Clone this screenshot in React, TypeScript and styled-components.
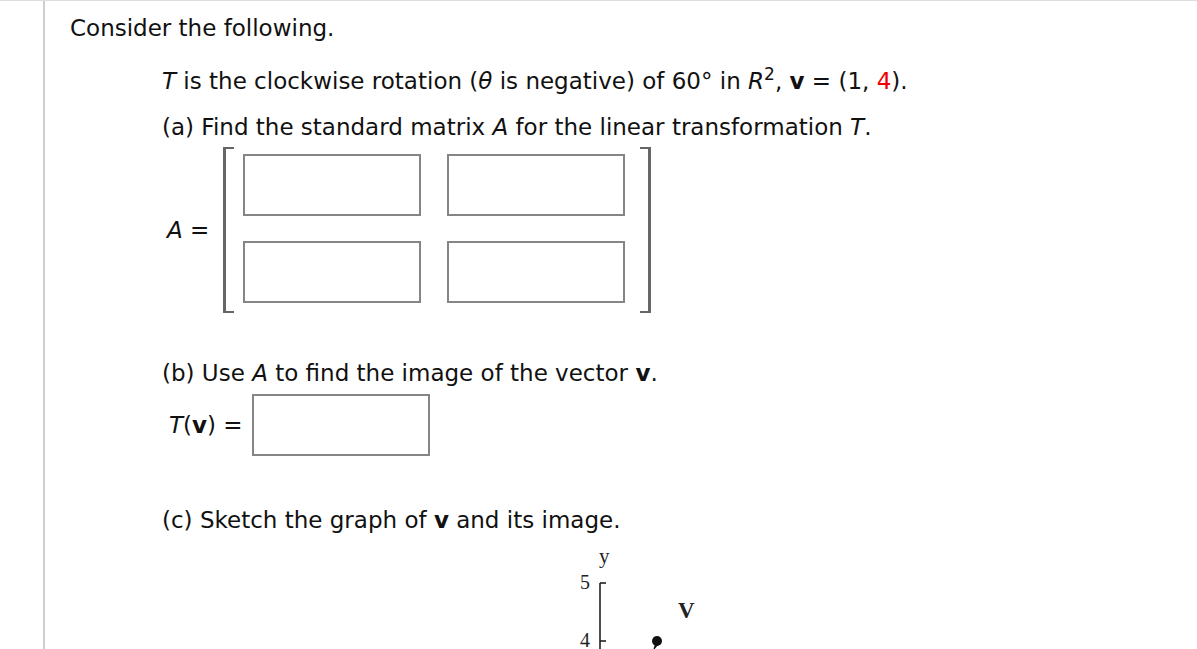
import React from "react";
import styled, { createGlobalStyle } from "styled-components";

const GlobalStyle = createGlobalStyle`
  html, body { margin: 0; padding: 0; background: #fff; }
  body { font-family: "DejaVu Sans", Verdana, sans-serif; color: #111; overflow: hidden; }
`;

const Page = styled.div`
  display: flex;
  border-top: 1px solid #dddddd;
  height: 648px;
  overflow: hidden;
`;

const Gutter = styled.div`
  width: 43px;
  flex: none;
  border-right: 2px solid #cfcfcf;
`;

const Content = styled.div`
  flex: 1;
  padding: 14px 0 0 25px;
  font-size: 23px;
  line-height: 26px;
`;

const Line = styled.p<{ $top?: number }>`
  margin: ${(p) => p.$top ?? 0}px 0 0 0;
  white-space: nowrap;
`;

const Indented = styled.div`
  padding-left: 92px;
`;

const Var = styled.i`
  font-style: italic;
`;

const Bold = styled.b`
  font-weight: bold;
`;

const Red = styled.span`
  color: #ee0000;
`;

const Sup = styled.sup`
  font-size: 17px;
  line-height: 0;
  vertical-align: 9px;
`;

const MatrixRow = styled.div`
  display: flex;
  align-items: flex-start;
  margin-top: 7px;
`;

const Label = styled.span<{ $width: number; $pad: number }>`
  width: ${(p) => p.$width}px;
  padding-left: ${(p) => p.$pad}px;
  box-sizing: border-box;
  flex: none;
  align-self: center;
  white-space: nowrap;
`;

const Bracket = styled.div<{ $side: "left" | "right" }>`
  width: 8px;
  height: 162px;
  flex: none;
  border: 2px solid #666;
  border-${(p) => (p.$side === "left" ? "right" : "left")}: none;
  border-${(p) => p.$side}-width: 3px;
`;

const Grid = styled.div`
  display: grid;
  grid-template-columns: repeat(2, 178px);
  column-gap: 26px;
  row-gap: 25px;
  margin: 7px 15px 0 9px;
`;

const AnswerBox = styled.div`
  width: 178px;
  height: 62px;
  box-sizing: border-box;
  border: 2px solid #858585;
  background: #fff;
`;

const VectorRow = styled.div`
  display: flex;
  align-items: center;
  margin-top: 8px;
`;

const Graph = styled.svg`
  display: block;
  margin: 14px 0 0 414px;
  overflow: visible;
`;

export default function App() {
  return (
    <>
      <GlobalStyle />
      <Page>
        <Gutter />
        <Content>
          <Line>Consider the following.</Line>
          <Indented>
            <Line $top={27}>
              <Var>T</Var> is the clockwise rotation (<Var>θ</Var> is negative) of 60° in{" "}
              <Var>R</Var>
              <Sup>2</Sup>, <Bold>v</Bold> = (1, <Red>4</Red>).
            </Line>
            <Line $top={20}>
              (a) Find the standard matrix <Var>A</Var> for the linear transformation <Var>T</Var>.
            </Line>
            <MatrixRow>
              <Label $width={61} $pad={5}>
                <Var>A</Var> =
              </Label>
              <Bracket $side="left" />
              <Grid>
                <AnswerBox />
                <AnswerBox />
                <AnswerBox />
                <AnswerBox />
              </Grid>
              <Bracket $side="right" />
            </MatrixRow>
            <Line $top={47}>
              (b) Use <Var>A</Var> to find the image of the vector <Bold>v</Bold>.
            </Line>
            <VectorRow>
              <Label $width={90} $pad={7}>
                <Var>T</Var>(<Bold>v</Bold>) =
              </Label>
              <AnswerBox />
            </VectorRow>
            <Line $top={51}>
              (c) Sketch the graph of <Bold>v</Bold> and its image.
            </Line>
            <Graph width="150" height="110" viewBox="0 0 150 110">
              <g fontFamily="'Liberation Serif', 'DejaVu Serif', serif" fill="#222">
                <text x="23" y="16" fontSize="21">y</text>
                <text x="4" y="42" fontSize="20">5</text>
                <text x="4" y="100" fontSize="20">4</text>
                <text x="102" y="71" fontSize="23" fontWeight="bold">V</text>
              </g>
              <g stroke="#222" strokeWidth="1.6" fill="none">
                <line x1="24" y1="36" x2="24" y2="110" />
                <line x1="24" y1="36" x2="30" y2="36" />
                <line x1="24" y1="94" x2="30" y2="94" />
              </g>
              <circle cx="81" cy="94" r="5" fill="#111" />
              <path d="M79 97 L77 104 L82 98 Z" fill="#111" />
            </Graph>
          </Indented>
        </Content>
      </Page>
    </>
  );
}
